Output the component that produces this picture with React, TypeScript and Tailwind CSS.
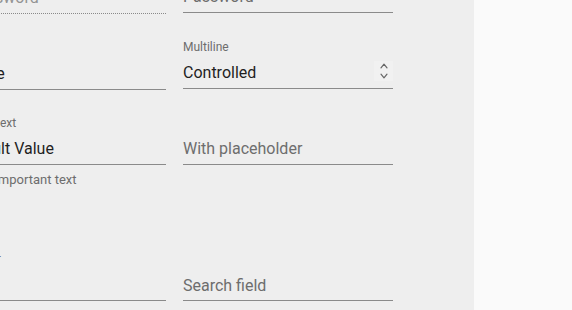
import React from "react";

type FieldProps = {
  label?: string;
  value?: string;
  shrink?: boolean;
  disabled?: boolean;
  helper?: string;
  spinner?: boolean;
  low?: boolean;
  valueClass?: string;
  labelClass?: string;
  helperClass?: string;
  fieldClass?: string;
};

function Spinner() {
  return (
    <div className="absolute right-0 -top-[1px] w-[19px] h-[20px] bg-[#f1f1f1]">
      <svg width="19" height="20" viewBox="0 0 19 20" className="block">
        <path d="M7 6.8 L10 3.2 L13 6.8" fill="none" stroke="#666666" strokeWidth="1.2" strokeLinecap="round" strokeLinejoin="round" />
        <path d="M7 13.2 L10 16.8 L13 13.2" fill="none" stroke="#666666" strokeWidth="1.2" strokeLinecap="round" strokeLinejoin="round" />
      </svg>
    </div>
  );
}

function Field({
  label,
  value,
  shrink,
  disabled,
  helper,
  spinner,
  low,
  valueClass = "",
  labelClass = "",
  helperClass = "",
  fieldClass = "",
}: FieldProps) {
  const underline = disabled
    ? "border-b border-dotted border-[#8a8a8a]"
    : "border-b border-solid border-[#8a8a8a]";
  const pad = low ? " pt-[2px] pb-[5px]" : " pt-[1px] pb-[6px]";
  return (
    <div className={"flex flex-col w-[210px] " + fieldClass}>
      <div className="h-[76px] flex flex-col">
        {shrink ? (
          <div className={"mt-[28px] h-[12px] text-[12px] leading-[12px] text-[#6d6d6d] whitespace-nowrap " + labelClass}>{label}</div>
        ) : (
          <div className="mt-[40px]" />
        )}
        <div className={"mt-[9px] relative " + underline + pad}>
          {shrink ? (
            <div className={"text-[16px] leading-[19px] h-[19px] whitespace-nowrap " + (disabled ? "text-[#939393] " : "text-[#1f1f1f] ") + valueClass}>
              {value}
            </div>
          ) : (
            <div className={"text-[16px] leading-[19px] h-[19px] whitespace-nowrap " + (disabled ? "text-[#939393] " : "text-[#6d6d6d] ") + valueClass}>
              {label}
            </div>
          )}
          {spinner ? <Spinner /> : null}
        </div>
      </div>
      {helper ? (
        <div className={"mt-[8px] text-[13px] leading-[13px] text-[#6d6d6d] whitespace-nowrap " + helperClass}>{helper}</div>
      ) : null}
    </div>
  );
}

export default function App() {
  return (
    <div className="w-[572px] h-[310px] flex bg-[#fafafa] overflow-hidden" style={{ fontFamily: "Roboto, 'Noto Sans', sans-serif" }}>
      <div className="w-[474px] h-[310px] shrink-0 bg-[#eeeeee] overflow-hidden">
        <div className="-ml-[44px] -mt-[63px] grid grid-cols-[210px_210px] grid-rows-[76px_76px_136px_76px] gap-x-[17px] items-start">
          <Field label="Password" disabled fieldClass="mt-[1px]" valueClass="pl-[12px]" />
          <Field label="Password" />
          <Field label="Name" value="Simple" shrink fieldClass="mt-[1px]" />
          <Field label="Multiline" value="Controlled" shrink spinner />
          <Field
            label="Helper text"
            value="Default Value"
            shrink
            helper="Some important text"
            labelClass="pl-[2px]"
            valueClass="pl-[3px]"
            helperClass="pl-[2px]"
          />
          <Field label="With placeholder" />
          <Field label="Number" value="" shrink labelClass="pl-[2px]" />
          <Field label="Search field" low />
        </div>
      </div>
      <div className="flex-1" />
    </div>
  );
}
